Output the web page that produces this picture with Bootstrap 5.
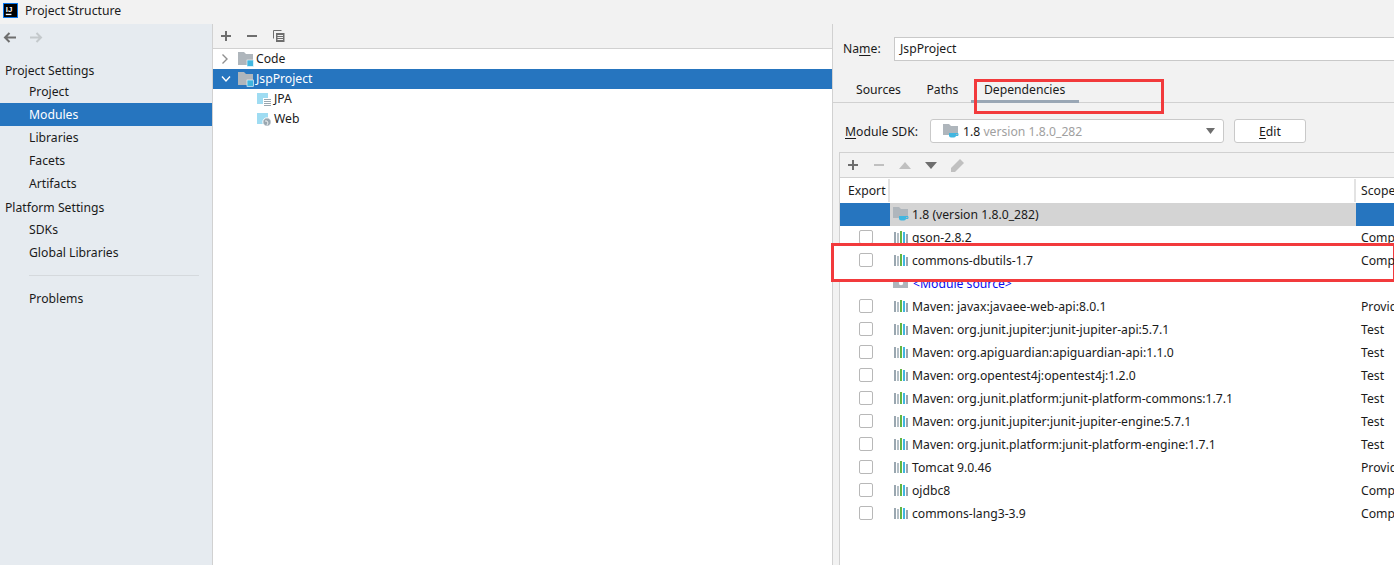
<!DOCTYPE html>
<html lang="en">
<head>
<meta charset="UTF-8">
<title>Project Structure</title>
<link href="https://cdn.jsdelivr.net/npm/bootstrap@5.3.3/dist/css/bootstrap.min.css" rel="stylesheet">
<style>
html, body { height: 100%; overflow: hidden; }
body { font-family: "Noto Sans", "Open Sans", sans-serif; font-size: 12.2px; color: #1a1a1a; background: #f2f2f2; line-height: 1; position: relative; }
.title-bar { height: 24px; background: #f2f2f2; padding: 0 0 4px 3px; gap: 7px; }
.title-bar span { padding-top: 2px; }
.main-area { height: 541px; }
.side-pane { width: 213px; background: #e6ebf0; border-right: 1px solid #d1d1d1; }
.nav-arrows { height: 35px; padding: 8px 0 0 3px; gap: 14px; }
.side-head { height: 23px; padding: 4px 0 0 5px; display: flex; align-items: center; }
.side-head.first { height: 21px; }
.side-item { height: 23px; padding: 2px 0 0 29px; display: flex; align-items: center; }
.side-item.on, .tree-row.on { background: #2675bf; color: #fff; }
.side-rule { height: 1px; background: #d5d9dd; margin: 11px 13px 11px 29px; }
.tree-pane { width: 620px; background: #fff; border-right: 1px solid #d1d1d1; }
.tool-strip { height: 25px; background: #f2f2f2; border-bottom: 1px solid #d1d1d1; padding-left: 7px; gap: 14px; }
.tree-row { height: 20px; display: flex; align-items: center; padding-bottom: 1px; }
.tree-row svg { flex: none; }
.tree-row span { padding-top: 2px; }
.detail-pane { flex: 1; min-width: 0; }
.name-row { height: 24px; margin-top: 13px; padding-left: 10px; }
.name-row label { width: 51px; padding-top: 1px; }
.name-field { flex: 1; height: 24px; background: #fff; border: 1px solid #c9c9c9; border-right: 0; padding: 1px 0 0 5px; display: flex; align-items: center; }
.tab-strip { height: 29px; margin-top: 13px; border-bottom: 1px solid #d1d1d1; padding-left: 10.5px; }
.tab-item { height: 29px; padding: 9px 12.5px 3px; display: flex; align-items: center; border-bottom: 3px solid transparent; margin-right: .5px; }
.tab-item.picked { border-bottom-color: #9aa7b5; padding-right: 13.5px; }
.sdk-row { margin-top: 16px; height: 24px; padding-left: 12px; }
.sdk-row label { width: 85px; padding-top: 2px; }
.sdk-box { width: 294px; height: 24px; background: #fff; border: 1px solid #c9c9c9; border-radius: 3px; padding: 0 4px 0 12px; gap: 4px; }
.sdk-box > span { padding-top: 2px; }
.edit-btn { width: 72px; height: 24px; margin-left: 10px; padding-top: 2px; background: #fff; border: 1px solid #c9c9c9; border-radius: 3px; display: flex; align-items: center; justify-content: center; }
.dep-panel { margin: 9px 0 0 6px; border-left: 1px solid #d1d1d1; height: 414px; background: #fff; }
.dep-tools { height: 26px; background: #f2f2f2; border-top: 1px solid #d1d1d1; border-bottom: 1px solid #d1d1d1; padding-left: 7px; gap: 14px; }
.dep-head { height: 25px; display: flex; align-items: center; }
.col-export { width: 50px; flex: none; padding-left: 8px; }
.col-name { width: 466px; flex: none; }
.dep-head .col-export, .dep-head .col-name { height: 23px; padding-top: 2px; border-right: 2px solid #e3e3e3; display: flex; align-items: center; }
.col-scope { padding: 2px 0 0 5px; white-space: nowrap; overflow: hidden; flex: 1; min-width: 0; }
.dep-row { height: 23px; display: flex; align-items: center; }
.dep-row.over-box { position: relative; z-index: 2; }
.dep-row .col-name { display: flex; align-items: center; gap: 3px; padding-left: 3px; }
.dep-row .col-name svg, .tick { margin-bottom: 2px; }
.dep-row .col-name span { padding-top: 2px; }
.dep-row.on .col-export, .dep-row.on .col-scope { background: #2675bf; height: 23px; }
.dep-row.on .col-name { background: #d4d4d4; height: 23px; }
.tick { display: block; width: 14px; height: 14px; border: 1px solid #b8b8b8; border-radius: 2px; background: #fff; margin-left: 11px; }
.src-link { color: #0a0aee; margin-left: 1px; }
.faint { color: #a0a0a0; }
.red-box { position: absolute; border: 3px solid #f23a3c; pointer-events: none; }
.box-tab { left: 974px; top: 79px; width: 190px; height: 35px; }
.box-row { left: 831px; top: 243px; width: 563px; height: 39px; border-right-width: 1px; background: #fff; z-index: 1; }
u { text-underline-offset: 2px; }
</style>
</head>
<body>
<svg width="0" height="0" class="position-absolute">
  <symbol id="folder-mod" viewBox="0 0 16 16"><path d="M0 1h6l2 2h7v11H0z" fill="#afb6bc"/><rect x="9" y="9" width="6.5" height="6.5" fill="#40b6e0" stroke="#fff" stroke-width=".6"/></symbol>
  <symbol id="lib" viewBox="0 0 16 16"><rect x="1" y="3" width="2" height="11" fill="#9aa7b0"/><rect x="4" y="4" width="2" height="10" fill="#b4bfc6"/><rect x="7" y="2" width="2" height="12" fill="#62b543"/><rect x="10" y="3" width="2" height="11" fill="#40b6e0"/><rect x="13" y="5" width="2" height="9" fill="#9aa7b0"/></symbol>
  <symbol id="sdk" viewBox="0 0 16 16"><path d="M0 1h6l2 2h7v9H0z" fill="#afb6bc"/><path d="M6 10h7v2.5a2 2 0 0 1-2 2H8a2 2 0 0 1-2-2z" fill="#40b6e0"/><path d="M13 10.500h2v2h-2" fill="none" stroke="#40b6e0"/></symbol>
  <symbol id="plus" viewBox="0 0 12 12"><path d="M5 1h2v4h4v2H7v4H5V7H1V5h4z"/></symbol>
  <symbol id="minus" viewBox="0 0 12 12"><rect x="1" y="5" width="10" height="2"/></symbol>
</svg>

<div class="title-bar d-flex align-items-center">
  <svg width="15" height="15" viewBox="0 0 16 16"><rect width="16" height="16" fill="#087cfa"/><rect x="1" y="1" width="14" height="14" fill="#000"/><rect x="3" y="11.500" width="6" height="1.400" fill="#fff"/><text x="3" y="9.500" font-size="8.500" font-weight="700" fill="#fff" font-family="Liberation Sans, sans-serif">IJ</text></svg>
  <span>Project Structure</span>
</div>

<div class="main-area d-flex">
  <aside class="side-pane flex-shrink-0">
    <div class="nav-arrows d-flex">
      <svg width="13" height="11" viewBox="0 0 13 11" fill="none" stroke="#6e6e6e" stroke-width="2"><path d="M13 5.500H2M6.500 1l-4.500 4.500 4.500 4.500"/></svg>
      <svg width="13" height="11" viewBox="0 0 13 11" fill="none" stroke="#c4c9cc" stroke-width="2"><path d="M0 5.500h11M6.500 1l4.500 4.500-4.500 4.500"/></svg>
    </div>
    <div class="side-head first">Project Settings</div>
    <div class="side-item">Project</div>
    <div class="side-item on">Modules</div>
    <div class="side-item">Libraries</div>
    <div class="side-item">Facets</div>
    <div class="side-item">Artifacts</div>
    <div class="side-head">Platform Settings</div>
    <div class="side-item">SDKs</div>
    <div class="side-item">Global Libraries</div>
    <div class="side-rule"></div>
    <div class="side-item">Problems</div>
  </aside>

  <section class="tree-pane flex-shrink-0">
    <div class="tool-strip d-flex align-items-center">
      <svg width="12" height="12" fill="#6e6e6e"><use href="#plus"/></svg>
      <svg width="12" height="12" fill="#6e6e6e"><use href="#minus"/></svg>
      <svg width="14" height="14" viewBox="0 0 14 14" fill="none" stroke="#6e6e6e"><path d="M1.500 9.500v-8h8"/><rect x="4" y="4" width="8.500" height="9" fill="#6e6e6e" stroke="none"/><path d="M5.500 6.500h5.500M5.500 8.500h5.500M5.500 10.500h5.500" stroke="#f2f2f2"/></svg>
    </div>
    <div class="tree-row">
      <svg class="ms-2" width="8" height="12" viewBox="0 0 8 12" fill="none" stroke="#8f8f8f" stroke-width="1.400"><path d="M1.500 1.500 6 6l-4.500 4.500"/></svg>
      <svg class="tree-icon" width="16" height="16" style="margin:0 2px 0 9px"><use href="#folder-mod"/></svg><span>Code</span>
    </div>
    <div class="tree-row on">
      <svg class="ms-2" width="10" height="8" viewBox="0 0 10 8" fill="none" stroke="#fff" stroke-width="1.400"><path d="M1 1.500 5 6l4-4.500"/></svg>
      <svg class="tree-icon" width="16" height="16" style="margin:0 2px 0 7px"><use href="#folder-mod"/></svg><span>JspProject</span>
    </div>
    <div class="tree-row">
      <svg width="14" height="14" viewBox="0 0 14 14" style="margin-left:44px;margin-right:3px"><rect width="11" height="11" y="1" fill="#9fdcf2"/><rect x="6" y="6" width="8" height="8" fill="#fff"/><path d="M7 7.500h7M7 9.500h7M7 11.500h7M7 13.500h7" stroke="#9aa7b0"/></svg><span>JPA</span>
    </div>
    <div class="tree-row">
      <svg width="14" height="14" viewBox="0 0 14 14" style="margin-left:44px;margin-right:3px"><rect width="11" height="11" y="1" fill="#9fdcf2"/><circle cx="10" cy="10" r="4.200" fill="#9aa7b0" stroke="#fff"/><path d="M8 9h2l1 2-1 2" stroke="#fff" fill="none" stroke-width=".8"/></svg><span>Web</span>
    </div>
  </section>

  <section class="detail-pane">
    <div class="name-row d-flex align-items-center">
      <label>Na<u>m</u>e:</label>
      <div class="name-field">JspProject</div>
    </div>
    <div class="tab-strip d-flex">
      <div class="tab-item">Sources</div>
      <div class="tab-item">Paths</div>
      <div class="tab-item picked">Dependencies</div>
    </div>
    <div class="sdk-row d-flex align-items-center">
      <label><u>M</u>odule SDK:</label>
      <div class="sdk-box d-flex align-items-center">
        <svg width="16" height="16"><use href="#sdk"/></svg>
        <span>1.8 <span class="faint">version 1.8.0_282</span></span>
        <svg class="ms-auto me-1" width="9" height="6" viewBox="0 0 9 6"><path d="M0 0h9L4.500 6z" fill="#6e6e6e"/></svg>
      </div>
      <div class="edit-btn"><span><u>E</u>dit</span></div>
    </div>
    <div class="dep-panel">
      <div class="dep-tools d-flex align-items-center">
        <svg width="12" height="12" fill="#6e6e6e"><use href="#plus"/></svg>
        <svg width="12" height="12" fill="#c0c0c0"><use href="#minus"/></svg>
        <svg width="12" height="7" viewBox="0 0 12 7"><path d="M0 7h12L6 0z" fill="#c0c0c0"/></svg>
        <svg width="12" height="7" viewBox="0 0 12 7"><path d="M0 0h12L6 7z" fill="#6e6e6e"/></svg>
        <svg width="14" height="14" viewBox="0 0 14 14"><path d="M0 14v-4L9 1l4 4-9 9z" fill="#c0c0c0"/></svg>
      </div>
      <div class="dep-head"><div class="col-export">Export</div><div class="col-name"></div><div class="col-scope">Scope</div></div>
      <div id="dep-rows"></div>
    </div>
  </section>
</div>

<div class="red-box box-tab"></div>
<div class="red-box box-row"></div>

<script>
  const deps = [
    ["1.8 (version 1.8.0_282)", "", "sdk"],
    ["gson-2.8.2", "Compile", "lib"],
    ["commons-dbutils-1.7", "Compile", "lib"],
    ["<Module source>", "", "src"],
    ["Maven: javax:javaee-web-api:8.0.1", "Provided", "lib"],
    ["Maven: org.junit.jupiter:junit-jupiter-api:5.7.1", "Test", "lib"],
    ["Maven: org.apiguardian:apiguardian-api:1.1.0", "Test", "lib"],
    ["Maven: org.opentest4j:opentest4j:1.2.0", "Test", "lib"],
    ["Maven: org.junit.platform:junit-platform-commons:1.7.1", "Test", "lib"],
    ["Maven: org.junit.jupiter:junit-jupiter-engine:5.7.1", "Test", "lib"],
    ["Maven: org.junit.platform:junit-platform-engine:1.7.1", "Test", "lib"],
    ["Tomcat 9.0.46", "Provided", "lib"],
    ["ojdbc8", "Compile", "lib"],
    ["commons-lang3-3.9", "Compile", "lib"],
  ];
  const rows = document.getElementById("dep-rows");
  deps.forEach(([name, scope, kind], i) => {
    const row = document.createElement("div");
    row.className = "dep-row" + (i === 0 ? " on" : "") + (i === 2 ? " over-box" : "");
    const tick = kind === "lib" ? '<span class="tick"></span>' : "";
    let icon = `<svg width="16" height="16"><use href="#lib"/></svg>`;
    if (kind === "sdk") icon = `<svg width="16" height="16"><use href="#sdk"/></svg>`;
    if (kind === "src") icon = `<svg width="16" height="16" viewBox="0 0 16 16"><path d="M0 1h6l2 2h7v10H0z" fill="#afb6bc"/><circle cx="8" cy="8" r="2.200" fill="#fff"/></svg>`;
    const label = name.replace("<", "&lt;").replace(">", "&gt;");
    row.innerHTML = `<div class="col-export">${tick}</div>
      <div class="col-name">${icon}<span class="${kind === "src" ? "src-link" : ""}">${label}</span></div>
      <div class="col-scope">${scope}</div>`;
    rows.appendChild(row);
  });
</script>
<script src="https://cdn.jsdelivr.net/npm/bootstrap@5.3.3/dist/js/bootstrap.bundle.min.js"></script>
</body>
</html>
